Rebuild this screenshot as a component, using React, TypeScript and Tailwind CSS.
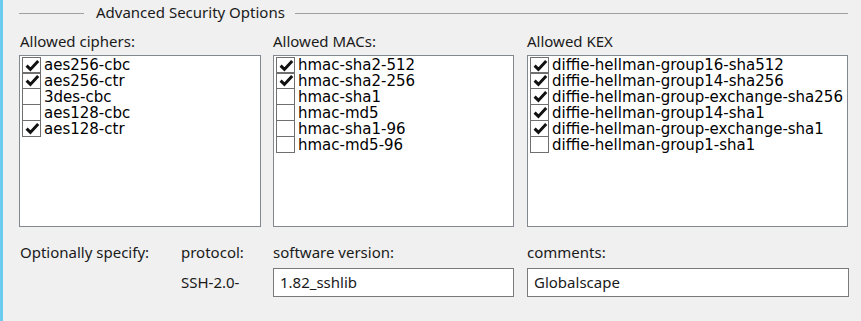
import React from "react";

const Check = () => (
  <svg width="15" height="13" viewBox="0 0 15 13" className="absolute left-[2px] top-[1px]">
    <path d="M1.6 6.6 L5.4 10.4 L13.2 2" fill="none" stroke="#111" strokeWidth="3" strokeLinecap="butt" strokeLinejoin="miter" />
  </svg>
);

type Item = { label: string; checked: boolean };

const ListBox = ({ items, width }: { items: Item[]; width: string }) => (
  <div className={`${width} h-[172px] bg-white border border-[#828790] pl-[2px] pt-[1px]`}>
    {items.map((it, i) => (
      <div key={i} className="flex items-center h-[16px]">
        <div
          className={`relative w-[19px] h-[17px] border border-[#6f6f6f] shrink-0 ${i > 0 ? "-mt-[1px]" : ""} self-start`}
        >
          {it.checked && <Check />}
        </div>
        <span
          className="ml-[3px] text-[15px] leading-[16px] h-[16px] inline-block overflow-hidden text-black whitespace-nowrap"
          style={{ fontFamily: "Tahoma, 'DejaVu Sans', Verdana, sans-serif" }}
        >
          {it.label}
        </span>
      </div>
    ))}
  </div>
);

const ciphers: Item[] = [
  { label: "aes256-cbc", checked: true },
  { label: "aes256-ctr", checked: true },
  { label: "3des-cbc", checked: false },
  { label: "aes128-cbc", checked: false },
  { label: "aes128-ctr", checked: true },
];
const macs: Item[] = [
  { label: "hmac-sha2-512", checked: true },
  { label: "hmac-sha2-256", checked: true },
  { label: "hmac-sha1", checked: false },
  { label: "hmac-md5", checked: false },
  { label: "hmac-sha1-96", checked: false },
  { label: "hmac-md5-96", checked: false },
];
const kex: Item[] = [
  { label: "diffie-hellman-group16-sha512", checked: true },
  { label: "diffie-hellman-group14-sha256", checked: true },
  { label: "diffie-hellman-group-exchange-sha256", checked: true },
  { label: "diffie-hellman-group14-sha1", checked: true },
  { label: "diffie-hellman-group-exchange-sha1", checked: true },
  { label: "diffie-hellman-group1-sha1", checked: false },
];

export default function App() {
  return (
    <div
      className="w-[861px] h-[321px] bg-[#f0f0f0] border-l-[3px] border-[#6ccbee] text-[15px] text-[#1a1a1a] overflow-hidden"
      style={{ fontFamily: "'Noto Sans', 'Open Sans', sans-serif" }}
    >
      {/* group header */}
      <div className="flex items-center h-[26px] pl-[16px] pr-[13px]">
        <div className="w-[65px] h-px bg-[#a0a0a0]" />
        <span className="ml-[12px] mr-[10px] leading-[20px] -mt-[2px]">Advanced Security Options</span>
        <div className="flex-1 h-px bg-[#a0a0a0]" />
      </div>

      {/* lists */}
      <div className="flex pl-[16px] mt-[5px]">
        <div className="flex flex-col">
          <div className="h-[24px] leading-[20px] pl-[1px]">Allowed ciphers:</div>
          <ListBox items={ciphers} width="w-[242px]" />
        </div>
        <div className="flex flex-col ml-[12px]">
          <div className="h-[24px] leading-[20px]">Allowed MACs:</div>
          <ListBox items={macs} width="w-[241px]" />
        </div>
        <div className="flex flex-col ml-[13px]">
          <div className="h-[24px] leading-[20px]">Allowed KEX</div>
          <ListBox items={kex} width="w-[321px]" />
        </div>
      </div>

      {/* bottom row */}
      <div className="flex pl-[17px] mt-[15px]">
        <div className="w-[161px] leading-[20px]">Optionally specify:</div>
        <div className="w-[92px] flex flex-col">
          <div className="h-[26px] leading-[20px]">protocol:</div>
          <div className="h-[28px] flex items-center">SSH-2.0-</div>
        </div>
        <div className="w-[254px] flex flex-col">
          <div className="h-[26px] leading-[20px]">software version:</div>
          <div className="w-[241px] h-[29px] bg-white border border-[#7a7a7a] flex items-center pl-[6px]">1.82_sshlib</div>
        </div>
        <div className="flex flex-col">
          <div className="h-[26px] leading-[20px]">comments:</div>
          <div className="w-[322px] h-[29px] bg-white border border-[#7a7a7a] flex items-center pl-[6px]">Globalscape</div>
        </div>
      </div>
    </div>
  );
}
